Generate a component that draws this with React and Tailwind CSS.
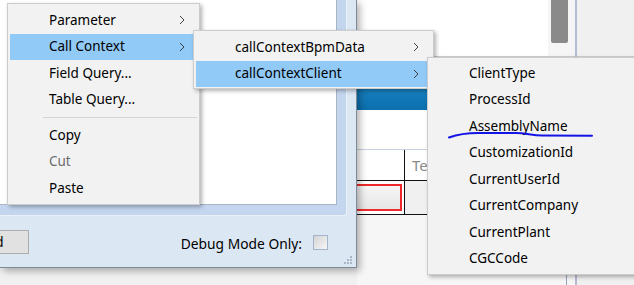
import React from "react";

function Chevron() {
  return (
    <svg width="6" height="9" viewBox="0 0 6 9" className="absolute right-[12px] top-1/2 -translate-y-1/2">
      <path d="M1 0.5 L5 4.5 L1 8.5" stroke="#404040" strokeWidth="1" fill="none" />
    </svg>
  );
}

function Item({ label, arrow, active, disabled }) {
  return (
    <div
      className={
        "relative h-[26.5px] mx-[2px] flex items-center pl-[39px] text-[13.5px] leading-none whitespace-nowrap " +
        (active ? "bg-[#91c9f7] " : "") +
        (disabled ? "text-[#6d6d6d]" : "text-[#000000]")
      }
    >
      {label}
      {arrow && <Chevron />}
    </div>
  );
}

export default function App() {
  return (
    <div className="relative w-[634px] h-[285px] overflow-hidden bg-[#f0f0f0] flex font-['Noto_Sans',sans-serif]">
      {/* Dialog window */}
      <div className="relative z-10 w-[357px] h-[268px] shrink-0 bg-[#dce7f4] border-r border-b border-[#7f8a99] shadow-[3px_3px_7px_rgba(0,0,0,0.3)] flex flex-col">
        <div className="w-[347px] h-[216px] bg-[#c4d6ee] border-r border-b border-[#eaf0f8] rounded-br-[3px]">
          <div className="w-[337px] h-[205px] bg-white border-r border-b border-[#a9b4c4]" />
        </div>
        <div className="flex items-center h-[24px] mt-[14px] pr-[28px]">
          <div className="ml-[-49px] w-[78px] h-[24px] bg-[#e1e1e1] border border-[#adadad] flex items-center justify-center text-[13.5px] text-[#000]">
            Find
          </div>
          <div className="ml-auto text-[13.8px] text-[#000] leading-none pt-[3px]">Debug Mode Only:</div>
          <div className="ml-[11px] w-[15px] h-[15px] border border-[#a3b4cc] bg-gradient-to-br from-[#d4d4d4] to-[#f7f7f7]" />
        </div>
        <svg width="10" height="10" viewBox="0 0 10 10" className="absolute right-[3px] bottom-[2px]">
          <rect x="7" y="1" width="2" height="2" fill="#a9b6c8" />
          <rect x="4" y="4" width="2" height="2" fill="#a9b6c8" />
          <rect x="7" y="4" width="2" height="2" fill="#a9b6c8" />
          <rect x="1" y="7" width="2" height="2" fill="#a9b6c8" />
          <rect x="4" y="7" width="2" height="2" fill="#a9b6c8" />
          <rect x="7" y="7" width="2" height="2" fill="#a9b6c8" />
        </svg>
      </div>

      {/* Application behind */}
      <div className="flex-1 flex h-full">
        <div className="w-[218px] flex flex-col bg-white">
          <div className="h-[57px] shrink-0 flex justify-end border-b border-[#cfcfcf]">
            <div className="w-[27px] h-full bg-[#f5f5f5] pl-[3px]">
              <div className="w-[17px] h-[43px] bg-[#8a8a8a] rounded-b-[2px]" />
            </div>
          </div>
          <div className="h-[32px] shrink-0 bg-white" />
          <div className="h-[21px] shrink-0 bg-gradient-to-b from-[#167fbf] to-[#0d6ead]" />
          <div className="h-[39px] shrink-0 bg-white" />
          <div className="h-[32px] shrink-0 flex border-t border-[#c9d2e2] border-b border-b-[#111]">
            <div className="w-[48px] border-r border-[#111] bg-white" />
            <div className="flex-1 flex items-center pl-[7px] text-[15px] text-[#8a8a8a]">Te</div>
          </div>
          <div className="h-[34px] shrink-0 flex border-b border-[#111]">
            <div className="w-[48px] border-r border-[#111] bg-white pt-[3px]">
              <div className="ml-[-10px] w-[55px] h-[27px] border-2 border-[#ee2a2a] bg-gradient-to-b from-[#f6f6f6] to-[#e6e6e6]" />
            </div>
            <div className="flex-1 bg-[#f0f0f0]" />
          </div>
          <div className="flex-1 bg-[#f6f6f6] flex justify-end">
            <div className="w-[9px] border-l border-[#9aa4c0]" />
          </div>
        </div>
        <div className="w-[2px] bg-[#b4bbd3]" />
        <div className="flex-1 flex flex-col">
          <div className="h-[57px] bg-[#f0f0f0] border-b border-[#cfcfcf]" />
          <div className="flex-1 bg-[#f0f0f0]" />
        </div>
      </div>

      {/* Context menu */}
      <div className="absolute z-20 left-[7px] top-[3px] w-[193px] h-[202px] border border-[#cccccc] bg-[#f2f2f2] shadow-[2px_2px_4px_rgba(0,0,0,0.3)] pt-[3px]">
        <Item label="Parameter" arrow />
        <Item label="Call Context" arrow active />
        <Item label="Field Query..." />
        <Item label="Table Query..." />
        <div className="h-[9px] flex items-center pl-[35px] pr-[2px]">
          <div className="flex-1 h-px bg-[#d4d4d4]" />
        </div>
        <Item label="Copy" />
        <Item label="Cut" disabled />
        <Item label="Paste" />
      </div>

      {/* Submenu 1 */}
      <div className="absolute z-30 left-[193px] top-[30px] w-[241px] h-[59px] border border-[#cccccc] bg-[#f2f2f2] shadow-[2px_2px_4px_rgba(0,0,0,0.3)] pt-[3px]">
        <Item label="callContextBpmData" arrow />
        <Item label="callContextClient" arrow active />
      </div>

      {/* Submenu 2 */}
      <div className="absolute z-40 left-[427px] top-[57px] w-[240px] h-[218px] border border-[#cccccc] bg-[#f2f2f2] shadow-[2px_2px_4px_rgba(0,0,0,0.3)] pt-[2px]">
        <Item label="ClientType" />
        <Item label="ProcessId" />
        <Item label="AssemblyName" />
        <Item label="CustomizationId" />
        <Item label="CurrentUserId" />
        <Item label="CurrentCompany" />
        <Item label="CurrentPlant" />
        <Item label="CGCCode" />
      </div>

      {/* Hand-drawn underline */}
      <svg className="absolute z-50 left-0 top-0 pointer-events-none" width="634" height="285" viewBox="0 0 634 285">
        <path
          d="M449 137.5 C 456 135, 464 133, 478 133 L 516 133 C 526 133, 532 135.5, 542 135.5 L 592 135.8"
          stroke="#1414e6"
          strokeWidth="2"
          fill="none"
          strokeLinecap="round"
        />
      </svg>
    </div>
  );
}
